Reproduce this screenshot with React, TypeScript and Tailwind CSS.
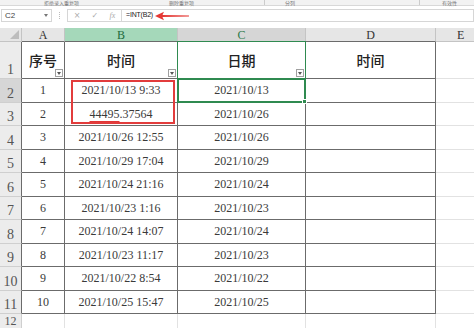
import React from "react";

const rows: [string, React.ReactNode, string][] = [
  ["1", "2021/10/13 9:33", "2021/10/13"],
  [
    "2",
    <>
      <span className="underline decoration-[#e03636] decoration-2 underline-offset-[3px]">44495</span>.37564
    </>,
    "2021/10/26",
  ],
  ["3", "2021/10/26 12:55", "2021/10/26"],
  ["4", "2021/10/29 17:04", "2021/10/29"],
  ["5", "2021/10/24 21:16", "2021/10/24"],
  ["6", "2021/10/23 1:16", "2021/10/23"],
  ["7", "2021/10/24 14:07", "2021/10/24"],
  ["8", "2021/10/23 11:17", "2021/10/23"],
  ["9", "2021/10/22 8:54", "2021/10/22"],
  ["10", "2021/10/25 15:47", "2021/10/25"],
];

const serif = "font-['Liberation_Serif',serif]";
const cjk = "font-['Noto_Sans_CJK_SC',sans-serif]";

function FilterBtn() {
  return (
    <span className="absolute right-[1px] bottom-[1px] w-[8px] h-[8px] border border-[#a0a0a0] bg-white flex items-center justify-center">
      <span className="w-0 h-0 border-x-[2px] border-t-[3px] border-x-transparent border-t-[#555]" />
    </span>
  );
}

export default function App() {
  return (
    <div className="w-[474px] h-[328px] overflow-hidden bg-white relative">
      {/* ribbon strip */}
      <div className="h-[6px] bg-[#f2f2f2] border-b border-[#d8d8d8] flex items-center text-[5px] leading-[5px] text-[#777] font-['Noto_Sans_CJK_SC',sans-serif]">
        <span className="ml-[44px]">拒绝录入重复项</span>
        <span className="ml-[90px]">删除重复项</span>
        <span className="ml-[70px] border-l border-[#ccc] pl-[20px]">分列</span>
        <span className="ml-[124px] border-l border-[#ccc] pl-[22px]">有效性</span>
      </div>

      {/* formula bar */}
      <div className="h-[22px] flex items-start pt-[3px] relative">
        <div className="ml-[1px] w-[51px] h-[13px] border border-[#d6d6d6] flex items-center justify-between px-[3px] text-[8px] text-[#444] font-['Liberation_Sans',sans-serif]">
          <span>C2</span>
          <span className="w-0 h-0 border-x-[2px] border-t-[3px] border-x-transparent border-t-[#777]" />
        </div>
        <div className="ml-[7px] mt-[3px] h-[7px] border-l border-dotted border-[#bbb]" />
        <div className="ml-[7px] w-[55px] h-[13px] border border-[#d6d6d6] flex items-center justify-around text-[8px] text-[#aaa] font-['DejaVu_Sans',sans-serif]">
          <span>×</span>
          <span>✓</span>
          <span className="italic font-['Liberation_Serif',serif]">fx</span>
        </div>
        <div className="flex-1 h-[13px] border border-l-0 border-[#d6d6d6] flex items-center pl-[4px] text-[7px] tracking-[-0.2px] text-[#222] font-['Liberation_Sans',sans-serif]">
          =INT(B2)
        </div>
        <svg className="absolute left-[155px] top-[5px]" width="34" height="10" viewBox="0 0 34 10">
          <path d="M0 5 L9 0.8 L7.5 4 L34 4.6 L34 5.4 L7.5 6 L9 9.2 Z" fill="#e53935" />
        </svg>
      </div>

      {/* sheet */}
      <div className="grid grid-cols-[22px_43px_113px_128px_130px_1fr] grid-rows-[14px_37px_repeat(10,23.5px)_14px] relative">
        {/* column headers */}
        <div className="bg-[#e6e6e6] border-r border-b border-[#c4c4c4] relative">
          <svg className="absolute right-[2px] bottom-[2px]" width="9" height="9" viewBox="0 0 9 9">
            <path d="M9 0 L9 9 L0 9 Z" fill="#bdbdbd" />
          </svg>
        </div>
        <div className={`bg-[#e6e6e6] border-r border-[#c4c4c4] border-b border-b-[#6b6b6b] flex items-center justify-center text-[12px] text-[#333] ${serif}`}>A</div>
        <div className={`bg-[#a5d8ba] border-r border-[#c4c4c4] border-b border-b-[#6b6b6b] flex items-center justify-center text-[12px] text-[#1e6b3c] ${serif}`}>B</div>
        <div className={`bg-[#d6d6d6] border-r border-[#c4c4c4] border-b border-b-[#2f8a50] flex items-center justify-center text-[12px] text-[#2f7a4c] ${serif}`}>C</div>
        <div className={`bg-[#e6e6e6] border-r border-[#c4c4c4] border-b border-b-[#6b6b6b] flex items-center justify-center text-[12px] text-[#333] ${serif}`}>D</div>
        <div className={`bg-[#e6e6e6] border-b border-[#c4c4c4] flex items-center pl-[21px] text-[12px] text-[#333] ${serif}`}>E</div>

        {/* row 1 */}
        <div className={`bg-[#ececec] border-r border-[#6b6b6b] border-b border-b-[#cfcfcf] flex items-end justify-center pb-[1px] text-[14px] leading-none text-[#555] ${serif}`}>1</div>
        <div className={`relative border-r border-b border-[#6b6b6b] flex items-center justify-center text-[14px] text-[#222] font-medium ${cjk}`}>
          序号
          <FilterBtn />
        </div>
        <div className={`relative border-r border-b border-[#6b6b6b] flex items-center justify-center text-[14px] text-[#222] font-medium ${cjk}`}>
          时间
          <FilterBtn />
        </div>
        <div className={`relative border-r border-b border-[#6b6b6b] flex items-center justify-center text-[14px] text-[#222] font-medium ${cjk}`}>
          日期
          <FilterBtn />
        </div>
        <div className={`border-r border-b border-[#6b6b6b] flex items-center justify-center text-[14px] text-[#222] font-medium ${cjk}`}>时间</div>
        <div className="border-b border-[#e2e2e2]" />

        {/* data rows */}
        {rows.map(([n, t, d], i) => (
          <React.Fragment key={n}>
            <div
              className={`${i === 0 ? "bg-[#d6d6d6]" : "bg-[#ececec]"} border-r border-[#6b6b6b] border-b border-b-[#cfcfcf] flex items-end justify-center pb-[1px] text-[14px] leading-none text-[#555] ${serif}`}
            >
              {i + 2}
            </div>
            <div className={`border-r border-b border-[#6b6b6b] flex items-center justify-center text-[12px] text-[#3a3a3a] ${serif}`}>{n}</div>
            <div className={`border-r border-b border-[#6b6b6b] flex items-center justify-center text-[12px] text-[#3a3a3a] ${serif}`}>{t}</div>
            <div className={`border-r border-b border-[#6b6b6b] flex items-center justify-center text-[12px] text-[#3a3a3a] ${serif}`}>{d}</div>
            <div className="border-r border-b border-[#6b6b6b]" />
            <div className="border-b border-[#e2e2e2]" />
          </React.Fragment>
        ))}

        {/* row 12 */}
        <div className={`bg-[#ececec] border-r border-[#cfcfcf] flex items-end justify-center text-[12px] leading-none text-[#555] ${serif}`}>
          <span className="mb-[1px]">12</span>
        </div>
        <div className="border-r border-[#e2e2e2]" />
        <div className="border-r border-[#e2e2e2]" />
        <div className="border-r border-[#e2e2e2]" />
        <div className="border-r border-[#e2e2e2]" />
        <div />

        {/* overlays */}
        <div className="absolute col-start-4 col-end-5 row-start-2 row-end-3 -left-[1px] -top-[1px] right-0 bottom-0 border border-[#2f8a50] pointer-events-none" />
        <div className="absolute col-start-4 col-end-5 row-start-3 row-end-4 -left-[1px] -top-[1px] right-0 bottom-0 border-2 border-[#2f8a50] pointer-events-none">
          <span className="absolute -right-[3px] -bottom-[3px] w-[5px] h-[5px] bg-[#2f8a50] border border-white" />
        </div>
        <div className="absolute col-start-3 col-end-4 row-start-3 row-end-5 left-[6px] right-[3px] top-[1px] bottom-[2px] border-2 border-[#e23c3c] pointer-events-none" />
      </div>
    </div>
  );
}
